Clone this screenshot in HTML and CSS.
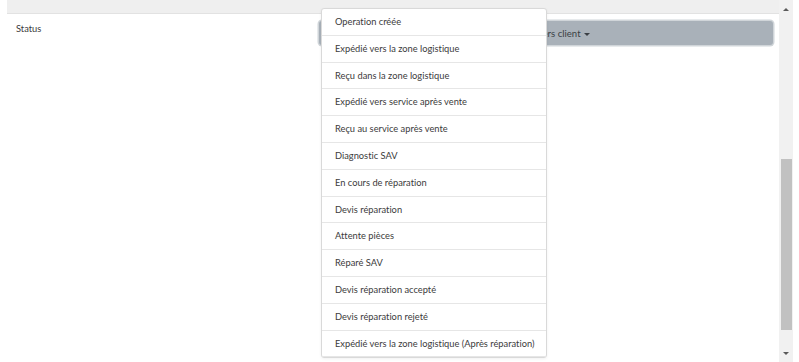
FILE: index.html
```html
<!DOCTYPE html>
<html lang="fr">
<head>
<meta charset="utf-8">
<title>Status</title>
<link rel="stylesheet" href="styles.css">
</head>
<body>
<div class="frame">
  <div class="content">
    <div class="topband"></div>
    <div class="row">
      <div class="label">Status</div>
      <div class="field">
        <button class="btn" type="button">Expédié vers client <span class="caret"></span></button>
        <ul class="menu">
          <li class="item">Operation créée</li>
          <li class="item">Expédié vers la zone logistique</li>
          <li class="item">Reçu dans la zone logistique</li>
          <li class="item">Expédié vers service après vente</li>
          <li class="item">Reçu au service après vente</li>
          <li class="item">Diagnostic SAV</li>
          <li class="item">En cours de réparation</li>
          <li class="item">Devis réparation</li>
          <li class="item">Attente pièces</li>
          <li class="item">Réparé SAV</li>
          <li class="item">Devis réparation accepté</li>
          <li class="item">Devis réparation rejeté</li>
          <li class="item">Expédié vers la zone logistique (Après réparation)</li>
        </ul>
      </div>
    </div>
  </div>
  <div class="scrollbar">
    <div class="sb-btn"><span class="arrow-up"></span></div>
    <div class="sb-track"><div class="sb-thumb"></div></div>
    <div class="sb-btn"><span class="arrow-down"></span></div>
  </div>
</div>
</body>
</html>
```
FILE: styles.css
```css
html, body {
  margin: 0;
  padding: 0;
  background: #ffffff;
  overflow: hidden;
}
body {
  font-family: Lato, "Open Sans", sans-serif;
  font-size: 9.3px;
  font-variant-ligatures: none;
  color: #3b3b3b;
}
.frame {
  display: flex;
  height: 362px;
  padding-left: 7px;
  padding-right: 6px;
  overflow: hidden;
}
.content {
  flex: 1;
  min-width: 0;
}
.topband {
  height: 13px;
  background: #efefef;
  border-bottom: 1px solid #e2e2e2;
}
.row {
  display: grid;
  grid-template-columns: 312px 1fr;
  padding-top: 7px;
  padding-right: 6px;
}
.label {
  padding-left: 9px;
  line-height: 15px;
}
.field {
  position: relative;
}
.btn {
  display: block;
  width: 100%;
  height: 24px;
  border: 0;
  border-radius: 3px;
  background: #a9b1b9;
  box-shadow: 0 0 0 1.5px rgba(170, 178, 186, 0.55);
  font-family: inherit;
  font-size: 9.6px;
  font-variant-ligatures: none;
  color: #3a3f44;
  text-align: center;
  padding: 0;
}
.caret {
  display: inline-block;
  width: 0;
  height: 0;
  margin-left: 1px;
  vertical-align: 1px;
  border-top: 3.5px solid #3a3f44;
  border-left: 3px solid transparent;
  border-right: 3px solid transparent;
}
.menu {
  position: absolute;
  left: 2px;
  top: -13px;
  width: 224px;
  margin: 0;
  padding: 0;
  list-style: none;
  background: #ffffff;
  border: 1px solid #d9d9d9;
  border-radius: 3px;
  box-shadow: 0 1px 3px rgba(0, 0, 0, 0.06);
}
.item {
  height: 25.8px;
  line-height: 26.8px;
  padding-left: 13px;
  border-bottom: 1px solid #e6e6e6;
  white-space: nowrap;
}
.scrollbar {
  width: 14px;
  display: flex;
  flex-direction: column;
  background: #f1f1f1;
}
.sb-btn {
  height: 17px;
  display: flex;
  align-items: center;
  justify-content: center;
}
.arrow-up {
  width: 0;
  height: 0;
  border-bottom: 3px solid #5a5a5a;
  border-left: 3px solid transparent;
  border-right: 3px solid transparent;
  margin-top: 2px;
}
.arrow-down {
  width: 0;
  height: 0;
  border-top: 3px solid #5a5a5a;
  border-left: 3px solid transparent;
  border-right: 3px solid transparent;
}
.sb-track {
  flex: 1;
}
.sb-thumb {
  margin: 142px 1px 0 2px;
  height: 171px;
  background: #c1c1c1;
}
```
